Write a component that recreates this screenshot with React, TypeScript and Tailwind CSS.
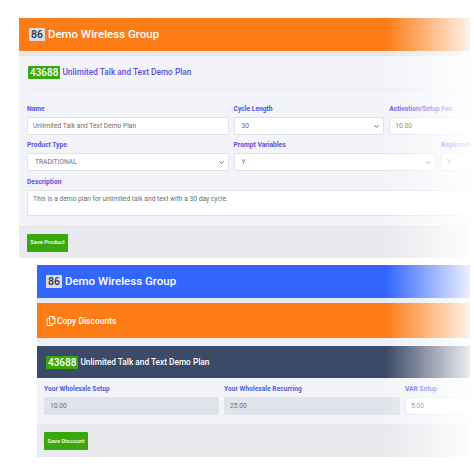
import React from 'react';
import { ChevronDown } from 'lucide-react';
import { FaRegCopy } from 'react-icons/fa';

const labelClass = 'block text-[6.7px] leading-[10px] font-bold text-[#5b4fe0] mb-[3px] whitespace-nowrap';
const fieldClass =
  'h-[18px] bg-white border border-[#e1e3ea] rounded-[1px] flex items-center justify-between text-[6.7px] text-[#6b6f76]';

const Field: React.FC<{ label: string; value: string; select?: boolean; className: string }> = ({
  label,
  value,
  select,
  className,
}) => (
  <div className={className}>
    <span className={labelClass}>{label}</span>
    <div className={`${fieldClass} ${select ? 'pl-[7px] pr-[3px]' : 'px-[5px]'}`}>
      <span className="whitespace-nowrap">{value}</span>
      {select && <ChevronDown size={7} strokeWidth={3} className="text-[#555]" />}
    </div>
  </div>
);

const IdBadge: React.FC<{ children: React.ReactNode }> = ({ children }) => (
  <span className="bg-[#d7dbe2] text-[#2d3748] text-[10.5px] leading-[13px] px-[2px] rounded-[1px] font-medium">
    {children}
  </span>
);

const PlanBadge: React.FC = () => (
  <span className="bg-[#38a80a] text-white text-[10px] leading-[13px] font-medium px-[2px] rounded-[1px]">
    43688
  </span>
);

const App: React.FC = () => {
  return (
    <div className="relative w-[474px] h-[474px] overflow-hidden bg-white font-['Roboto',sans-serif]">
      <div className="flex flex-col pt-[18px] pl-[19px]">
        {/* product panel */}
        <div className="w-[470px] bg-[#f3f4f9]">
          <div className="h-[33px] bg-[#fe7c16] flex items-center gap-[3px] pl-[10px] text-white text-[11.5px] font-medium">
            <IdBadge>86</IdBadge>
            <span>Demo Wireless Group</span>
          </div>
          <div className="h-[5px] bg-[#e6e7eb]" />
          <div className="mx-[8px] h-[34px] border-b border-[#e9eaef] flex items-center gap-[2px] pl-[1px] text-[8.3px] font-medium text-[#5b4fe0]">
            <PlanBadge />
            <span>Unlimited Talk and Text Demo Plan</span>
          </div>
          <div className="pl-[8px] pt-[14px] flex flex-col gap-[5px]">
            <div className="flex gap-[5px]">
              <Field className="w-[202px]" label="Name" value="Unlimited Talk and Text Demo Plan" />
              <Field className="w-[151px]" label="Cycle Length" value="30" select />
              <Field className="w-[100px]" label="Activation/Setup Fee" value="10.00" />
            </div>
            <div className="flex gap-[5px]">
              <Field className="w-[202px]" label="Product Type" value="TRADITIONAL" select />
              <Field className="w-[203px]" label="Prompt Variables" value="Y" select />
              <Field className="w-[48px]" label="Replenish" value="Y" />
            </div>
          </div>
          <div className="pl-[8px] pt-[6px] pb-[10px]">
            <span className={labelClass}>Description</span>
            <div className="h-[26px] w-[445px] bg-white border border-[#e1e3ea] rounded-[1px] px-[5px] pt-[3px] text-[6.7px] leading-[10px] text-[#6b6f76]">
              This is a demo plan for unlimited talk and text with a 30 day cycle.
            </div>
          </div>
          <div className="h-[32px] bg-[#e9eaee] border-t border-[#e1e2e7] flex items-center pl-[8px]">
            <button className="h-[18px] w-[41px] bg-[#38a80a] text-white text-[5.8px] font-medium rounded-[1px] whitespace-nowrap">
              Save Product
            </button>
          </div>
        </div>

        {/* discount panel */}
        <div className="w-[470px] ml-[18px] mt-[7px] bg-[#f3f4f9]">
          <div className="h-[33px] bg-[#3366ff] flex items-center gap-[3px] pl-[9px] text-white text-[11.5px] font-medium">
            <IdBadge>86</IdBadge>
            <span>Demo Wireless Group</span>
          </div>
          <div className="h-[5px] bg-[#e8eaf2]" />
          <div className="h-[35px] bg-[#fe7c16] flex items-center gap-[1px] pl-[9px] pt-[1px] text-white text-[8.5px] font-medium">
            <FaRegCopy size={10} />
            <span>Copy Discounts</span>
          </div>
          <div className="h-[8px] bg-[#eef0f6]" />
          <div className="h-[32px] bg-[#3b4a68] flex items-center gap-[2px] pl-[9px] text-white text-[8.3px] font-medium">
            <PlanBadge />
            <span>Unlimited Talk and Text Demo Plan</span>
          </div>
          <div className="flex gap-[5px] pl-[7px] pt-[6px] pb-[9px]">
            <div className="w-[175px]">
              <span className={labelClass + ' !text-[#4f5fe0]'}>Your Wholesale Setup</span>
              <div className="h-[18px] bg-[#e1e3ea] rounded-[1px] flex items-center px-[6px] text-[6.7px] text-[#6b6f76]">10.00</div>
            </div>
            <div className="w-[176px]">
              <span className={labelClass + ' !text-[#4f5fe0]'}>Your Wholesale Recurring</span>
              <div className="h-[18px] bg-[#e1e3ea] rounded-[1px] flex items-center px-[6px] text-[6.7px] text-[#6b6f76]">25.00</div>
            </div>
            <div className="w-[90px]">
              <span className={labelClass + ' !text-[#4f5fe0]'}>VAR Setup</span>
              <div className="h-[18px] bg-white border border-[#e1e3ea] rounded-[1px] flex items-center px-[5px] text-[6.7px] text-[#6b6f76]">5.00</div>
            </div>
          </div>
          <div className="h-[33px] bg-[#e9eaee] border-t border-[#e4e5ea] flex items-center pl-[7px]">
            <button className="h-[18px] w-[44px] bg-[#38a80a] text-white text-[5.8px] font-medium rounded-[1px] whitespace-nowrap">
              Save Discount
            </button>
          </div>
        </div>
      </div>

      {/* white fade over the right edge */}
      <div className="absolute top-0 bottom-0 left-[386px] w-[84px] bg-gradient-to-r from-white/0 to-white/90" />
      <div className="absolute top-0 bottom-0 left-[470px] w-[4px] bg-white" />
    </div>
  );
};

export default App;
